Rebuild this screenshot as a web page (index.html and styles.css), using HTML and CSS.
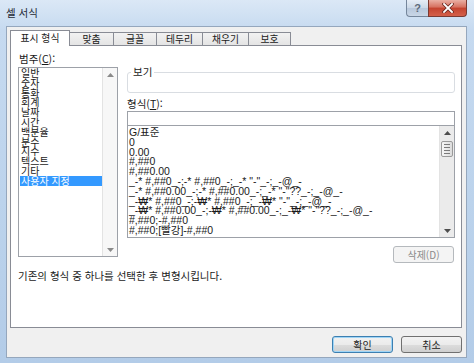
FILE: index.html
```html
<!DOCTYPE html>
<html lang="ko">
  <head>
    <meta charset="UTF-8">
    <title>셀 서식</title>
    <link rel="stylesheet" href="styles.css">
  </head>
  <body>
    <div class="window">
      <div class="titlebar">
        <span class="title">셀 서식</span>
        <div class="caption">
          <span class="cap-help">?</span>
          <span class="cap-close">
            <svg width="12" height="10" viewBox="0 0 12 10">
              <path d="M2 1 L10 9 M10 1 L2 9" stroke="#6b2a22" stroke-width="3.4" stroke-linecap="square"/>
              <path d="M2 1 L10 9 M10 1 L2 9" stroke="#fff" stroke-width="1.8" stroke-linecap="square"/>
            </svg>
          </span>
        </div>
      </div>

      <div class="client">
        <div class="tabs">
          <div class="tab active">표시 형식</div>
          <div class="tab">맞춤</div>
          <div class="tab">글꼴</div>
          <div class="tab">테두리</div>
          <div class="tab">채우기</div>
          <div class="tab">보호</div>
        </div>

        <div class="panel">
          <div class="panel-main">
            <div class="col-left">
              <div class="label">범주(<u>C</u>):</div>
              <div class="listbox cat">
                <ul class="items">
                  <li>일반</li>
                  <li>숫자</li>
                  <li>통화</li>
                  <li>회계</li>
                  <li>날짜</li>
                  <li>시간</li>
                  <li>백분율</li>
                  <li>분수</li>
                  <li>지수</li>
                  <li>텍스트</li>
                  <li>기타</li>
                  <li class="selected">사용자 지정</li>
                </ul>
                <div class="vscroll plain">
                  <span class="arrow"><svg width="7" height="4" viewBox="0 0 7 4"><path d="M0 4 L3.5 0 L7 4 Z" fill="#8a8a8a"/></svg></span>
                  <span class="track"></span>
                  <span class="arrow"><svg width="7" height="4" viewBox="0 0 7 4"><path d="M0 0 L3.5 4 L7 0 Z" fill="#8a8a8a"/></svg></span>
                </div>
              </div>
            </div>

            <div class="col-right">
              <fieldset class="preview">
                <legend>보기</legend>
                <div class="preview-body"></div>
              </fieldset>
              <div class="label spaced">형식(<u>T</u>):</div>
              <div class="textbox"></div>
              <div class="listbox fmt">
                <ul class="items">
                  <li>G/표준</li>
                  <li>0</li>
                  <li>0.00</li>
                  <li>#,##0</li>
                  <li>#,##0.00</li>
                  <li>_-* #,##0_-;-* #,##0_-;_-* "-"_-;_-@_-</li>
                  <li>_-* #,##0.00_-;-* #,##0.00_-;_-* "-"??_-;_-@_-</li>
                  <li>_-₩* #,##0_-;-₩* #,##0_-;_-₩* "-"_-;_-@_-</li>
                  <li>_-₩* #,##0.00_-;-₩* #,##0.00_-;_-₩* "-"??_-;_-@_-</li>
                  <li>#,##0;-#,##0</li>
                  <li>#,##0;[빨강]-#,##0</li>
                </ul>
                <div class="vscroll">
                  <span class="arrow"><svg width="7" height="4" viewBox="0 0 7 4"><path d="M0 4 L3.5 0 L7 4 Z" fill="#4d4d4d"/></svg></span>
                  <span class="track">
                    <span class="thumb"><i></i><i></i><i></i><i></i></span>
                  </span>
                  <span class="arrow"><svg width="7" height="4" viewBox="0 0 7 4"><path d="M0 0 L3.5 4 L7 0 Z" fill="#4d4d4d"/></svg></span>
                </div>
              </div>
              <div class="btn-row">
                <button class="btn disabled">삭제(D)</button>
              </div>
            </div>
          </div>
          <p class="hint">기존의 형식 중 하나를 선택한 후 변형시킵니다.</p>
        </div>

        <div class="dlg-buttons">
          <button class="btn default">확인</button>
          <button class="btn">취소</button>
        </div>
      </div>
    </div>
  </body>
</html>
```

FILE: styles.css
```css
body {
  margin: 0;
  padding: 0;
  background: #2b3a4c;
  font-family: "Noto Sans CJK KR", "Liberation Sans", sans-serif;
  font-size: 10px;
  color: #1a1a1a;
}

.window {
  width: 474px;
  height: 363px;
  box-sizing: border-box;
  padding: 0 7px 5px 6px;
  display: flex;
  flex-direction: column;
  background: linear-gradient(to bottom, #dbe8f6 0px, #c6daf0 30px, #bcd3ec 200px, #b3cce8 363px);
}

.titlebar {
  height: 26px;
  display: flex;
  align-items: flex-start;
  justify-content: space-between;
}

.title {
  margin-top: 7px;
  font-size: 10.5px;
  line-height: 12px;
  color: #1e2a36;
}

.caption {
  display: flex;
}

.cap-help, .cap-close {
  height: 17px;
  box-sizing: border-box;
  border: 1px solid #75869b;
  border-top: none;
  display: flex;
  align-items: center;
  justify-content: center;
}

.cap-help {
  width: 22px;
  border-right: none;
  border-radius: 0 0 0 4px;
  background: linear-gradient(to bottom, #e6edf6, #cbd8e7 50%, #b8c8dc 51%, #c9d6e6);
  font-family: "Liberation Sans", sans-serif;
  font-weight: bold;
  font-size: 11px;
  color: #5d6a7a;
}

.cap-close {
  width: 39px;
  border-color: #7a3a32;
  border-radius: 0 0 4px 0;
  background: linear-gradient(to bottom, #eab0a4, #d6705f 45%, #c4432f 50%, #d4604a);
}

.client {
  flex: 1;
  background: #f0f0f0;
  border: 1px solid #95a7bd;
  padding: 3px 0 0 3px;
}

/* tabs */
.tabs {
  display: flex;
  align-items: flex-end;
  height: 15px;
}

.tab {
  height: 13px;
  box-sizing: border-box;
  border: 1px solid #898c95;
  border-bottom: none;
  border-left: none;
  background: linear-gradient(to bottom, #f2f2f2, #e4e4e4);
  font-size: 9.8px;
  line-height: 12px;
  text-align: center;
}

.tab.active {
  height: 16px;
  margin-bottom: -1px;
  position: relative;
  z-index: 1;
  background: #fff;
  border-left: 1px solid #898c95;
  line-height: 15px;
}

.tab:nth-child(1) { width: 60px; }
.tab:nth-child(2) { width: 44px; }
.tab:nth-child(3) { width: 43px; }
.tab:nth-child(4) { width: 46px; }
.tab:nth-child(5) { width: 46px; }
.tab:nth-child(6) { width: 42px; }

.panel {
  width: 452px;
  height: 283px;
  box-sizing: border-box;
  border: 1px solid #898c95;
  background: #fff;
  padding: 6px 5px 0 7px;
}

.panel-main {
  display: flex;
  gap: 9px;
}

.col-left {
  width: 100px;
}

.col-right {
  width: 328px;
}

.label {
  height: 14px;
  line-height: 14px;
  font-size: 10.5px;
  padding-left: 1px;
}

.label.spaced {
  margin-top: 4px;
  padding-left: 0;
}

/* list boxes */
.listbox {
  display: flex;
  box-sizing: border-box;
  border: 1px solid #9da1a8;
  background: #fff;
}

.listbox.cat {
  margin-top: 1px;
  height: 190px;
}

.listbox.fmt {
  height: 113px;
}

.items {
  flex: 1;
  list-style: none;
  margin: 0;
  padding: 0 0 0 1px;
  overflow: hidden;
}

.items li {
  height: 9.8px;
  line-height: 9.8px;
  padding-left: 1px;
  white-space: nowrap;
}

.cat .items li {
  font-size: 10px;
}

.fmt .items {
  padding-top: 2px;
}

.fmt .items li {
  font-family: "Liberation Sans", "Noto Sans CJK KR", sans-serif;
  font-size: 10.5px;
  padding-left: 0;
}

.items li.selected {
  background: #3399ff;
  color: #fff;
}

.vscroll {
  width: 14px;
  display: flex;
  flex-direction: column;
  background: #ebebeb;
  border-left: 1px solid #e3e3e3;
}

.vscroll.plain {
  background: #f7f7f7;
}

.vscroll .arrow {
  height: 13px;
  display: flex;
  align-items: center;
  justify-content: center;
}

.vscroll .track {
  flex: 1;
}

.thumb {
  display: flex;
  flex-direction: column;
  align-items: center;
  justify-content: center;
  gap: 2px;
  margin: 2px 1px 0 1px;
  height: 16px;
  box-sizing: border-box;
  border: 1px solid #9a9a9a;
  border-radius: 2px;
  background: linear-gradient(to right, #f6f6f6, #dcdcdc);
}

.thumb i {
  display: block;
  width: 6px;
  height: 1px;
  background: #7a7a7a;
}

/* preview */
.preview {
  margin: 14px 0 0 0;
  padding: 0;
  border: 1px solid #d9dde2;
  border-radius: 3px;
}

.preview legend {
  margin-left: 3px;
  padding: 0 2px;
  font-size: 10.5px;
  line-height: 12px;
}

.preview-body {
  height: 14px;
}

.textbox {
  height: 14px;
  box-sizing: border-box;
  border: 1px solid #9da1a8;
  border-bottom: none;
  background: #fff;
}

/* buttons */
.btn-row {
  display: flex;
  justify-content: flex-end;
  margin-top: 8px;
  padding-right: 1px;
}

.btn {
  width: 61px;
  height: 17px;
  box-sizing: border-box;
  border: 1px solid #707070;
  border-radius: 3px;
  background: linear-gradient(to bottom, #f2f2f2 0%, #ebebeb 50%, #dddddd 51%, #cfcfcf 100%);
  font-family: "Noto Sans CJK KR", sans-serif;
  font-size: 10px;
  line-height: 14px;
  color: #1a1a1a;
  padding: 0;
}

.btn.disabled {
  border-color: #b5b9bd;
  background: #f4f4f4;
  color: #8a8a8a;
}

.btn.default {
  border-color: #3c7fb1;
  box-shadow: inset 0 0 0 1px #9fd5f6;
}

.hint {
  margin: 6px 0 0 0;
  line-height: 14px;
  font-size: 10.5px;
}

.dlg-buttons {
  width: 452px;
  display: flex;
  justify-content: flex-end;
  gap: 8px;
  margin-top: 8px;
}
```
